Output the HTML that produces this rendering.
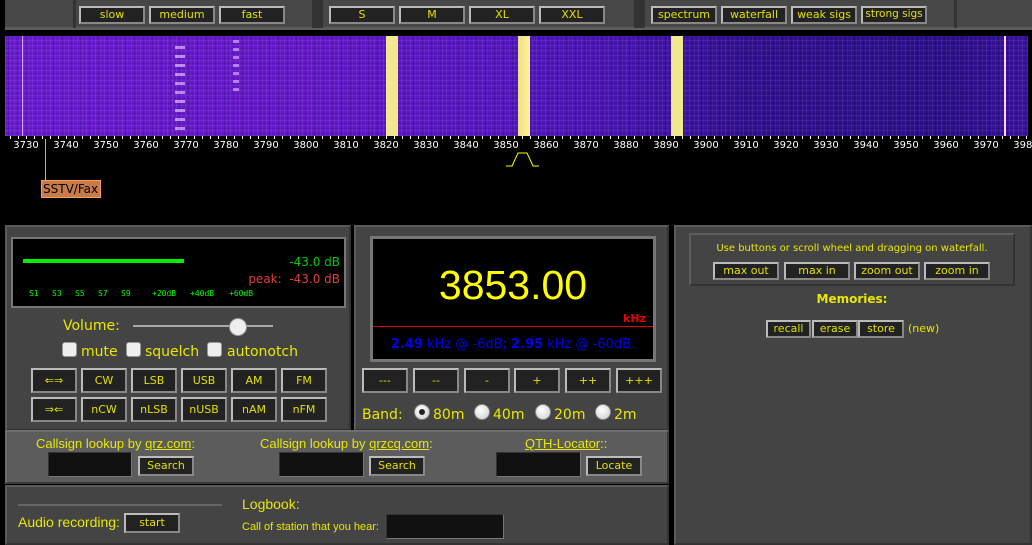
<!DOCTYPE html>
<html><head><meta charset="utf-8"><style>
*{box-sizing:border-box;margin:0;padding:0}
body{width:1032px;height:542px;background:#000;position:relative;overflow:hidden;font-family:"DejaVu Sans","Liberation Sans",sans-serif;color:#e8e800}
.a{position:absolute}
.p{position:absolute;background:#444;border:2px solid #5a5a5a;border-right-color:#333;border-bottom-color:#333}
.b{position:absolute;background:#222;border:2px solid #bbb;border-right-color:#888;border-bottom-color:#888;color:#e0e000;font-size:11px;text-align:center;line-height:13px;white-space:nowrap}
.in{position:absolute;background:#111;border:1px solid #333;border-right-color:#777;border-bottom-color:#777}
.cb{position:absolute;width:15px;height:15px;background:#eee;border-radius:3px;border:1px solid #999}
.rd{position:absolute;width:16px;height:16px;border-radius:50%;background:radial-gradient(circle at 40% 35%,#fff,#ccc);border:1px solid #888}
.t{position:absolute;white-space:nowrap}
.sl{position:absolute;font-family:"DejaVu Sans Mono",monospace;font-size:8px;color:#0f0}
</style></head><body>
<div class="a" style="left:5px;top:0;width:1027px;height:30px;background:#474747;border-bottom:3px solid #5c5c5c"></div>
<div class="a" style="left:73px;top:0;width:3px;height:28px;background:#333"></div>
<div class="a" style="left:312px;top:0;width:11px;height:28px;background:#333"></div>
<div class="a" style="left:634px;top:0;width:11px;height:28px;background:#333"></div>
<div class="a" style="left:954px;top:0;width:3px;height:28px;background:#333"></div>
<div class="b" style="left:79px;top:6px;width:66px;height:18px">slow</div>
<div class="b" style="left:149px;top:6px;width:66px;height:18px">medium</div>
<div class="b" style="left:219px;top:6px;width:66px;height:18px">fast</div>
<div class="b" style="left:329px;top:6px;width:66px;height:18px">S</div>
<div class="b" style="left:399px;top:6px;width:66px;height:18px">M</div>
<div class="b" style="left:469px;top:6px;width:66px;height:18px">XL</div>
<div class="b" style="left:539px;top:6px;width:66px;height:18px">XXL</div>
<div class="b" style="left:651px;top:6px;width:66px;height:18px">spectrum</div>
<div class="b" style="left:721px;top:6px;width:66px;height:18px">waterfall</div>
<div class="b" style="left:791px;top:6px;width:66px;height:18px">weak sigs</div>
<div class="b" style="left:861px;top:6px;width:66px;height:18px;font-size:10.5px">strong sigs</div>
<div class="a" style="left:5px;top:36px;width:1023px;height:100px;background:
linear-gradient(90deg,transparent 381px,#f2e890 381px,#f2e890 393px,transparent 393px,transparent 513px,#f0e080 513px,#fff2a0 525px,transparent 525px,transparent 666px,#f2e890 666px,#f2e890 678px,transparent 678px,transparent 999px,#ffd0ff 999px,#ffd0ff 1001px,transparent 1001px),
repeating-linear-gradient(90deg,rgba(255,255,255,.07) 0 1px,transparent 1px 3px,rgba(0,0,0,.12) 3px 4px,transparent 4px 5px,rgba(255,255,255,.05) 5px 6px,transparent 6px 9px),
repeating-linear-gradient(0deg,rgba(255,255,255,.06) 0 1px,transparent 1px 2px,rgba(0,0,0,.1) 2px 3px,transparent 3px 5px),
linear-gradient(90deg,#6a1ad0 0,#6418c8 300px,#5416c0 500px,#4a14b4 600px,#30108f 750px,#2c0f8a 950px,#3a12a0 1023px)"></div>
<div class="a" style="left:22px;top:36px;width:1px;height:100px;background:#d8a0ff"></div>
<div class="a" style="left:175px;top:40px;width:10px;height:96px;background:repeating-linear-gradient(0deg,transparent 0 6px,rgba(255,230,255,.55) 6px 9px)"></div>
<div class="a" style="left:233px;top:40px;width:6px;height:56px;background:repeating-linear-gradient(0deg,transparent 0 5px,rgba(255,230,255,.5) 5px 8px)"></div>
<div class="a" style="left:5px;top:136px;width:1023px;height:3px;background:repeating-linear-gradient(90deg,#fff 0 1px,transparent 1px 8px);background-position:5px 0"></div>
<div class="a" id="sc" style="left:0;top:139px;width:1032px;height:14px;font-size:10px;color:#fff"></div>
<svg class="a" style="left:505px;top:150px" width="36" height="18"><polyline points="1,16 7,16 13,3 22,3 28,16 34,16" fill="none" stroke="#ff0" stroke-width="1"/></svg>
<div class="a" style="left:45px;top:139px;width:1px;height:42px;background:#e0a070"></div>
<div class="a" style="left:41px;top:180px;width:60px;height:18px;background:#c87a48;border:1px solid #f0a060;color:#000;font-size:12px;line-height:16px;padding-left:1px">SSTV/Fax</div>
<div class="p" style="left:5px;top:225px;width:346px;height:206px"></div>
<div class="a" style="left:11px;top:237px;width:335px;height:71px;background:#000;border:2px solid #777"></div>
<div class="a" style="left:23px;top:259px;width:161px;height:4px;background:#0e0"></div>
<div class="t" style="right:692px;top:255px;color:#0c0;font-size:12px">-43.0 dB</div>
<div class="t" style="right:692px;top:272px;color:#e04040;font-size:12px">peak:&nbsp; -43.0 dB</div>
<div class="sl" style="left:29px;top:289px">S1</div><div class="sl" style="left:52px;top:289px">S3</div><div class="sl" style="left:75px;top:289px">S5</div><div class="sl" style="left:98px;top:289px">S7</div><div class="sl" style="left:121px;top:289px">S9</div><div class="sl" style="left:152px;top:289px">+20dB</div><div class="sl" style="left:190px;top:289px">+40dB</div><div class="sl" style="left:229px;top:289px">+60dB</div>
<div class="t" style="left:63px;top:318px;font-size:14px">Volume:</div>
<div class="a" style="left:133px;top:325px;width:140px;height:2px;background:#aaa"></div>
<div class="a" style="left:229px;top:318px;width:18px;height:18px;border-radius:50%;background:#eee;border:1px solid #999"></div>
<div class="cb" style="left:62px;top:342px"></div><div class="t" style="left:81px;top:344px;font-size:14px">mute</div>
<div class="cb" style="left:126px;top:342px"></div><div class="t" style="left:145px;top:344px;font-size:14px">squelch</div>
<div class="cb" style="left:207px;top:342px"></div><div class="t" style="left:227px;top:344px;font-size:14px">autonotch</div>
<div class="b" style="left:31px;top:368px;width:46px;height:25px;line-height:21px">⇐⇒</div>
<div class="b" style="left:81px;top:368px;width:46px;height:25px;line-height:21px">CW</div>
<div class="b" style="left:131px;top:368px;width:46px;height:25px;line-height:21px">LSB</div>
<div class="b" style="left:181px;top:368px;width:46px;height:25px;line-height:21px">USB</div>
<div class="b" style="left:231px;top:368px;width:46px;height:25px;line-height:21px">AM</div>
<div class="b" style="left:281px;top:368px;width:46px;height:25px;line-height:21px">FM</div>
<div class="b" style="left:31px;top:397px;width:46px;height:25px;line-height:21px">⇒⇐</div>
<div class="b" style="left:81px;top:397px;width:46px;height:25px;line-height:21px">nCW</div>
<div class="b" style="left:131px;top:397px;width:46px;height:25px;line-height:21px">nLSB</div>
<div class="b" style="left:181px;top:397px;width:46px;height:25px;line-height:21px">nUSB</div>
<div class="b" style="left:231px;top:397px;width:46px;height:25px;line-height:21px">nAM</div>
<div class="b" style="left:281px;top:397px;width:46px;height:25px;line-height:21px">nFM</div>
<div class="p" style="left:354px;top:225px;width:315px;height:206px"></div>
<div class="a" style="left:370px;top:236px;width:286px;height:126px;background:#000;border:3px solid #777"></div>
<div class="t" style="left:370px;width:286px;top:262px;text-align:center;font-size:41px;color:#ff0;font-family:'Liberation Sans',sans-serif">3853.00</div>
<div class="t" style="left:623px;top:312px;font-size:11px;font-weight:bold;color:#e00">kHz</div>
<div class="a" style="left:373px;top:326px;width:280px;height:1px;background:#d00"></div>
<div class="t" style="left:370px;width:286px;top:337px;text-align:center;font-size:13px;color:#00e"><b>2.49</b> kHz @ -6dB; <b>2.95</b> kHz @ -60dB.</div>
<div class="b" style="left:362px;top:368px;width:46px;height:25px;line-height:21px">---</div>
<div class="b" style="left:413px;top:368px;width:46px;height:25px;line-height:21px">--</div>
<div class="b" style="left:464px;top:368px;width:46px;height:25px;line-height:21px">-</div>
<div class="b" style="left:514px;top:368px;width:46px;height:25px;line-height:21px">+</div>
<div class="b" style="left:565px;top:368px;width:46px;height:25px;line-height:21px">++</div>
<div class="b" style="left:616px;top:368px;width:46px;height:25px;line-height:21px">+++</div>
<div class="t" style="left:362px;top:407px;font-size:14px">Band:</div>
<div class="rd" style="left:414px;top:404px"><div class="a" style="left:4px;top:4px;width:6px;height:6px;border-radius:50%;background:#222"></div></div><div class="t" style="left:433px;top:407px;font-size:14px">80m</div>
<div class="rd" style="left:474px;top:404px"></div><div class="t" style="left:493px;top:407px;font-size:14px">40m</div>
<div class="rd" style="left:535px;top:404px"></div><div class="t" style="left:554px;top:407px;font-size:14px">20m</div>
<div class="rd" style="left:595px;top:404px"></div><div class="t" style="left:614px;top:407px;font-size:14px">2m</div>
<div class="p" style="left:674px;top:225px;width:358px;height:320px"></div>
<div class="a" style="left:689px;top:233px;width:326px;height:53px;border:2px solid #5e5e5e;border-right-color:#333;border-bottom-color:#333"></div>
<div class="t" style="left:689px;width:326px;top:243px;text-align:center;font-size:10px">Use buttons or scroll wheel and dragging on waterfall.</div>
<div class="b" style="left:713px;top:262px;width:66px;height:18px">max out</div>
<div class="b" style="left:784px;top:262px;width:66px;height:18px">max in</div>
<div class="b" style="left:854px;top:262px;width:66px;height:18px">zoom out</div>
<div class="b" style="left:924px;top:262px;width:66px;height:18px">zoom in</div>
<div class="t" style="left:689px;width:326px;top:292px;text-align:center;font-size:12px;font-weight:bold">Memories:</div>
<div class="b" style="left:766px;top:320px;width:45px;height:18px">recall</div>
<div class="b" style="left:812px;top:320px;width:46px;height:18px">erase</div>
<div class="b" style="left:858px;top:320px;width:46px;height:18px">store</div>
<div class="t" style="left:908px;top:322px;font-size:11px">(new)</div>
<div class="a" style="left:5px;top:430px;width:664px;height:54px;background:#5c5c5c;border:2px solid #6e6e6e;border-right-color:#3a3a3a;border-bottom-color:#3a3a3a"></div>
<div class="t" style="left:36px;top:436px;font-size:13px;font-family:'Liberation Sans',sans-serif">Callsign lookup by <u>qrz.com</u>:</div>
<div class="in" style="left:48px;top:452px;width:84px;height:25px"></div>
<div class="b" style="left:138px;top:456px;width:56px;height:20px;line-height:16px">Search</div>
<div class="t" style="left:260px;top:436px;font-size:13px;font-family:'Liberation Sans',sans-serif">Callsign lookup by <u>qrzcq.com</u>:</div>
<div class="in" style="left:279px;top:452px;width:85px;height:25px"></div>
<div class="b" style="left:369px;top:456px;width:56px;height:20px;line-height:16px">Search</div>
<div class="t" style="left:525px;top:436px;font-size:13px;font-family:'Liberation Sans',sans-serif"><u>QTH-Locator</u>::</div>
<div class="in" style="left:496px;top:452px;width:85px;height:25px"></div>
<div class="b" style="left:586px;top:456px;width:56px;height:20px;line-height:16px">Locate</div>
<div class="p" style="left:5px;top:485px;width:664px;height:60px"></div>
<div class="a" style="left:18px;top:504px;width:204px;height:2px;background:#666"></div>
<div class="t" style="left:18px;top:514px;font-size:14px;font-family:'Liberation Sans',sans-serif">Audio recording:</div>
<div class="b" style="left:124px;top:513px;width:56px;height:20px;line-height:16px">start</div>
<div class="t" style="left:242px;top:496px;font-size:14px;font-family:'Liberation Sans',sans-serif">Logbook:</div>
<div class="t" style="left:242px;top:521px;font-size:11px;font-family:'Liberation Sans',sans-serif">Call of station that you hear:</div>
<div class="in" style="left:386px;top:514px;width:118px;height:25px"></div>
<script>
var s=document.getElementById('sc'),h='';
for(var i=0;i<26;i++){var f=3730+i*10,x=26+i*40;h+='<span style="position:absolute;top:1px;left:'+(x-13)+'px;width:26px;text-align:center">'+f+'</span>';}
s.innerHTML=h;
</script>
</body></html>
